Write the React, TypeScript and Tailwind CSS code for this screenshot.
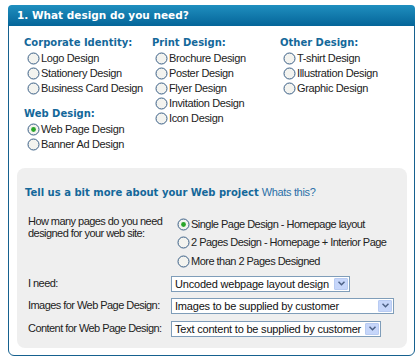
import React from 'react';

const corporate = ['Logo Design', 'Stationery Design', 'Business Card Design'];
const print = ['Brochure Design', 'Poster Design', 'Flyer Design', 'Invitation Design', 'Icon Design'];
const other = ['T-shirt Design', 'Illustration Design', 'Graphic Design'];
const web = [
  { label: 'Web Page Design', checked: true },
  { label: 'Banner Ad Design', checked: false },
];
const pages = [
  { label: 'Single Page Design - Homepage layout', checked: true },
  { label: '2 Pages Design - Homepage + Interior Page', checked: false },
  { label: 'More than 2 Pages Designed', checked: false },
];

const Radio = ({ checked }: { checked?: boolean }) => (
  <svg width="13" height="13" viewBox="0 0 13 13" className="shrink-0">
    <circle cx="6.5" cy="6.5" r="5.5" fill="#f3f3ef" stroke="#3a5f86" strokeWidth="1" />
    {checked && <circle cx="6.5" cy="6.5" r="2.4" fill="#2aa52a" />}
  </svg>
);

const Option = ({ label, checked, tight }: { label: string; checked?: boolean; tight?: boolean }) => (
  <div
    className={`flex h-[15px] items-center gap-[1px] whitespace-nowrap pl-[3px] text-[11px] text-[#222] ${
      tight ? 'tracking-[-0.52px]' : 'tracking-[-0.35px]'
    }`}
  >
    <Radio checked={checked} />
    <span>{label}</span>
  </div>
);

const Heading = ({ children }: { children: React.ReactNode }) => (
  <div className="h-[16px] whitespace-nowrap text-[10px] font-bold leading-[16px] text-[#14689a] [font-family:'DejaVu_Sans',sans-serif]">
    {children}
  </div>
);

const Select = ({ value, width }: { value: string; width: string }) => (
  <div className={`flex h-[16px] items-center justify-between border border-[#7f9db9] bg-white pl-[3px] pr-[1px] ${width}`}>
    <span className="whitespace-nowrap text-[11px] leading-[14px] tracking-[-0.2px] text-[#111]">{value}</span>
    <div className="flex h-[12px] w-[14px] shrink-0 items-center justify-center rounded-[1px] border border-[#b8cbf2] bg-[#c6d6fa]">
      <svg width="7" height="5" viewBox="0 0 7 5">
        <path d="M0.5 0.8 L3.5 3.8 L6.5 0.8" fill="none" stroke="#4d6185" strokeWidth="1.5" />
      </svg>
    </div>
  </div>
);

export default function App() {
  return (
    <div className="min-h-[359px] bg-white pl-[8px] pt-[5px] [font-family:'Liberation_Sans',Arial,sans-serif]">
      <div className="h-[351px] w-[407px] rounded-[6px] border-[1.5px] border-[#16618f]">
        {/* Header */}
        <div className="-mx-[1px] -mt-[1px] flex h-[21px] items-center whitespace-nowrap rounded-t-[4px] bg-gradient-to-b from-[#1f8fbf] to-[#046599] pl-[9px] text-[10.5px] font-bold text-white [font-family:'DejaVu_Sans',sans-serif]">
          1. What design do you need?
        </div>

        {/* Categories */}
        <div className="grid grid-cols-[128px_128px_128px] pl-[15px] pt-[9px]">
          <div>
            <Heading>Corporate Identity:</Heading>
            {corporate.map((o) => (
              <Option key={o} label={o} />
            ))}
            <div className="mt-[10px]">
              <Heading>Web Design:</Heading>
            </div>
            {web.map((o) => (
              <Option key={o.label} label={o.label} checked={o.checked} />
            ))}
          </div>
          <div>
            <Heading>Print Design:</Heading>
            {print.map((o) => (
              <Option key={o} label={o} />
            ))}
          </div>
          <div>
            <Heading>Other Design:</Heading>
            {other.map((o) => (
              <Option key={o} label={o} />
            ))}
          </div>
        </div>

        {/* Web project panel */}
        <div className="ml-[8px] mt-[16px] h-[180px] w-[390px] rounded-[8px] bg-[#efefef] pl-[8px] pt-[16px]">
          <div className="flex items-baseline gap-[3px] whitespace-nowrap">
            <span className="text-[10px] font-bold text-[#14689a] [font-family:'DejaVu_Sans',sans-serif]">
              Tell us a bit more about your Web project
            </span>
            <span className="text-[11px] tracking-[-0.35px] text-[#2a6fa8]">Whats this?</span>
          </div>

          <div className="mt-[12px] grid grid-cols-[143px_1fr] whitespace-nowrap pl-[3px] text-[11px] tracking-[-0.55px] text-[#222]">
            <div className="pt-[2px] leading-[12px]">
              How many pages do you need
              <br />
              designed for your web site:
            </div>
            <div className="flex flex-col gap-[3.5px] pl-[3px] pt-[4px]">
              {pages.map((p) => (
                <Option key={p.label} label={p.label} checked={p.checked} tight />
              ))}
            </div>

            <div className="mt-[7px] flex h-[16px] items-center">I need:</div>
            <div className="mt-[7px]">
              <Select value="Uncoded webpage layout design" width="w-[179px]" />
            </div>

            <div className="mt-[6px] flex h-[16px] items-center">Images for Web Page Design:</div>
            <div className="mt-[6px]">
              <Select value="Images to be supplied by customer" width="w-[223px]" />
            </div>

            <div className="mt-[7px] flex h-[16px] items-center">Content for Web Page Design:</div>
            <div className="mt-[7px]">
              <Select value="Text content to be supplied by customer" width="w-[210px]" />
            </div>
          </div>
        </div>
      </div>
    </div>
  );
}
